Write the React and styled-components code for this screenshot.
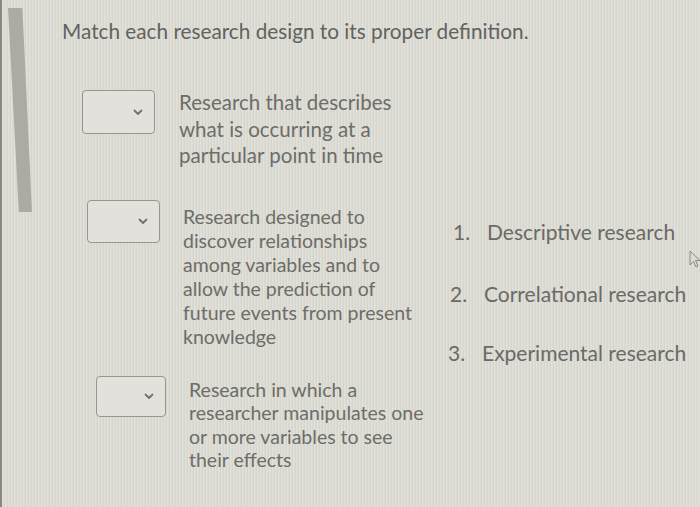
import React from "react";
import styled, { createGlobalStyle } from "styled-components";

const Global = createGlobalStyle`
  html, body { margin: 0; padding: 0; }
  body {
    width: 700px; height: 507px; overflow: hidden;
    background: #dcdbd4;
    font-family: Lato, "Open Sans", sans-serif;
  }
`;

const Page = styled.div`
  position: relative;
  width: 700px;
  height: 507px;
  display: flex;
  background-color: #dcdbd3;
  background-image: repeating-linear-gradient(
    90deg,
    rgba(255, 255, 255, 0.14) 0px,
    rgba(255, 255, 255, 0.14) 1px,
    rgba(0, 0, 0, 0.025) 2px,
    rgba(0, 0, 0, 0.025) 3px
  );
  border-left: 2px solid #8d877d;
  box-sizing: border-box;
  overflow: hidden;
`;

const Rail = styled.div`
  width: 38px;
  flex: none;
  display: flex;
  padding-top: 8px;
  box-sizing: border-box;
`;

const Thumb = styled.div`
  margin-left: 6px;
  width: 24px;
  height: 204px;
  background: #acaba3;
  clip-path: polygon(0 0, 60% 0, 100% 100%, 45% 100%);
`;

const Content = styled.div`
  flex: 1;
  padding-left: 22px;
  padding-top: 18px;
  color: #6b6b67;
`;

const Title = styled.div`
  font-size: 20.75px;
  line-height: 26px;
  color: #626260;
`;

const Body = styled.div`
  display: flex;
  margin-top: 46px;
`;

const LeftCol = styled.div`
  width: 370px;
  display: flex;
  flex-direction: column;
`;

const Row = styled.div`
  display: flex;
  align-items: flex-start;
  margin-left: ${(p) => p.$shift}px;
  margin-top: ${(p) => p.$top}px;
`;

const Select = styled.div`
  width: ${(p) => p.$w}px;
  height: ${(p) => p.$h}px;
  box-sizing: border-box;
  border: 1.5px solid #96958f;
  border-radius: 4px;
  background: #e2e1db;
  display: flex;
  align-items: center;
  justify-content: flex-end;
  padding-right: 11px;
  flex: none;
`;

const Definition = styled.div`
  margin-left: ${(p) => p.$gap}px;
  margin-top: ${(p) => p.$dy}px;
  font-size: ${(p) => p.$size}px;
  line-height: ${(p) => p.$lh}px;
  width: ${(p) => p.$w}px;
  color: #6d6d69;
`;

const RightCol = styled.ol`
  list-style: none;
  margin: 0;
  padding: 0;
  margin-top: 129px;
  margin-left: 21px;
  display: flex;
  flex-direction: column;
`;

const Answer = styled.li`
  display: flex;
  font-size: 21px;
  line-height: 26px;
  color: #6a6a66;
  margin-left: ${(p) => p.$shift}px;
  margin-bottom: ${(p) => p.$after}px;
`;

const Num = styled.span`
  width: 34px;
  flex: none;
`;

const Cursor = styled.svg`
  position: absolute;
  left: 687px;
  top: 250px;
`;

const Chevron = () => (
  <svg width="10" height="7" viewBox="0 0 10 7">
    <path d="M1.5 1.5 L5 5 L8.5 1.5" fill="none" stroke="#72726d" strokeWidth="1.8" strokeLinecap="round" strokeLinejoin="round" />
  </svg>
);

const rows = [
  { shift: 20, top: 0, w: 73, h: 44, gap: 24, dy: -1, size: 20.5, lh: 26.5, tw: 250, text: "Research that describes what is occurring at a particular point in time" },
  { shift: 25, top: 31, w: 73, h: 43, gap: 23, dy: 5, size: 19.5, lh: 24, tw: 235, text: "Research designed to discover relationships among variables and to allow the prediction of future events from present knowledge" },
  { shift: 34, top: 27, w: 70, h: 41, gap: 23, dy: 2, size: 19.5, lh: 23.5, tw: 260, text: "Research in which a researcher manipulates one or more variables to see their effects" },
];

const answers = [
  { n: "1.", t: "Descriptive research", shift: 0, after: 36 },
  { n: "2.", t: "Correlational research", shift: -3, after: 33 },
  { n: "3.", t: "Experimental research", shift: -5, after: 0 },
];

export default function App() {
  return (
    <>
      <Global />
      <Page>
        <Rail>
          <Thumb />
        </Rail>
        <Content>
          <Title>Match each research design to its proper definition.</Title>
          <Body>
            <LeftCol>
              {rows.map((r, i) => (
                <Row key={i} $shift={r.shift} $top={r.top}>
                  <Select $w={r.w} $h={r.h}>
                    <Chevron />
                  </Select>
                  <Definition $gap={r.gap} $dy={r.dy} $size={r.size} $lh={r.lh} $w={r.tw}>
                    {r.text}
                  </Definition>
                </Row>
              ))}
            </LeftCol>
            <RightCol>
              {answers.map((a) => (
                <Answer key={a.n} $shift={a.shift} $after={a.after}>
                  <Num>{a.n}</Num>
                  <span>{a.t}</span>
                </Answer>
              ))}
            </RightCol>
          </Body>
        </Content>
        <Cursor width="14" height="20" viewBox="0 0 14 20">
          <path d="M1 1 L1 15 L4.5 11.5 L7 17 L9 16 L6.5 10.5 L11 10.5 Z" fill="none" stroke="#8a8a85" strokeWidth="1" />
        </Cursor>
      </Page>
    </>
  );
}
